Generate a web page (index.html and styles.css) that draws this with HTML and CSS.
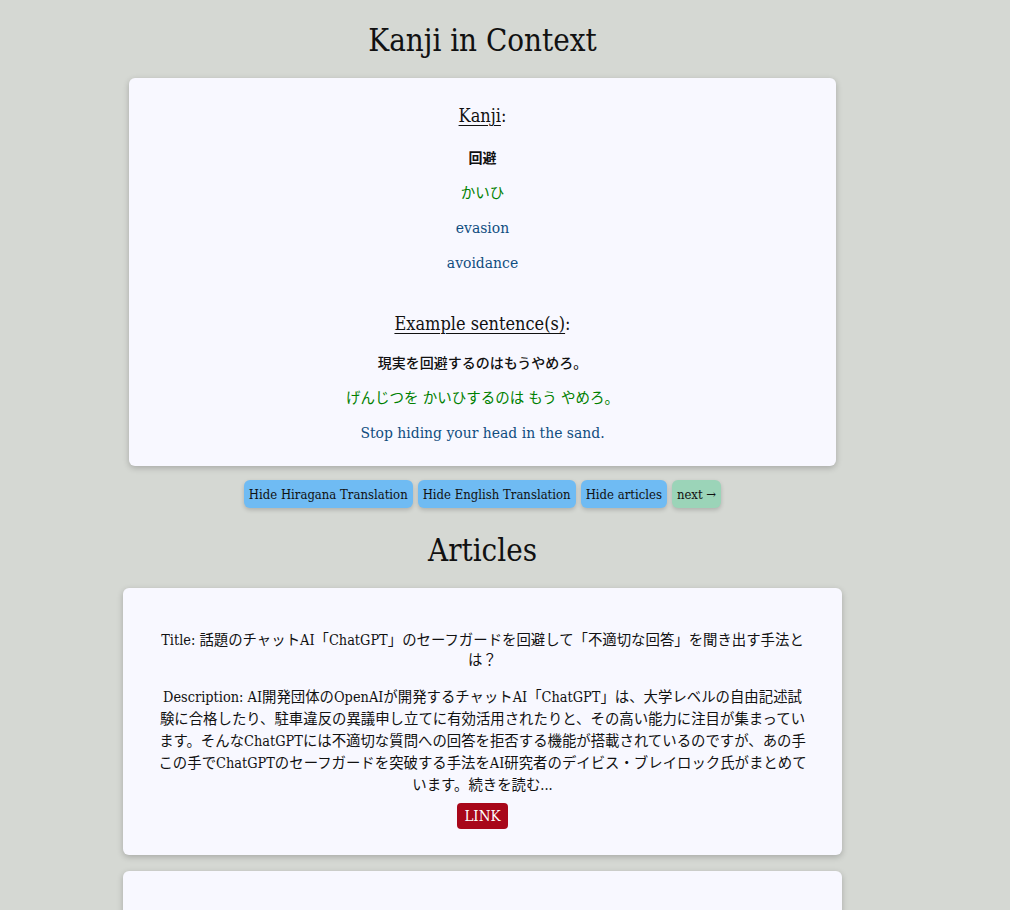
FILE: index.html
```html
<!DOCTYPE html>
<html lang="ja">
<head>
<meta charset="utf-8">
<title>Kanji in Context</title>
<link rel="stylesheet" href="styles.css">
</head>
<body>
  <main class="page">
    <h1 class="page-title">Kanji in Context</h1>

    <section class="card kanji-card">
      <h2 class="label"><u>Kanji</u>:</h2>
      <p class="line kanji">回避</p>
      <p class="line kana">かいひ</p>
      <p class="line meaning">evasion</p>
      <p class="line meaning">avoidance</p>

      <h2 class="label example-label"><u>Example sentence(s)</u>:</h2>
      <p class="line sentence">現実を回避するのはもうやめろ。</p>
      <p class="line kana">げんじつを かいひするのは もう やめろ。</p>
      <p class="line meaning">Stop hiding your head in the sand.</p>
    </section>

    <div class="controls">
      <button class="btn btn-toggle">Hide Hiragana Translation</button>
      <button class="btn btn-toggle">Hide English Translation</button>
      <button class="btn btn-toggle">Hide articles</button>
      <button class="btn btn-next">next →</button>
    </div>

    <h2 class="section-title">Articles</h2>

    <article class="card article-card">
      <p class="article-title">Title: 話題のチャットAI「ChatGPT」のセーフガードを回避して「不適切な回答」を聞き出す手法とは？</p>
      <p class="article-desc">Description: AI開発団体のOpenAIが開発するチャットAI「ChatGPT」は、大学レベルの自由記述試験に合格したり、駐車違反の異議申し立てに有効活用されたりと、その高い能力に注目が集まっています。そんなChatGPTには不適切な質問への回答を拒否する機能が搭載されているのですが、あの手この手でChatGPTのセーフガードを突破する手法をAI研究者のデイビス・ブレイロック氏がまとめています。続きを読む...</p>
      <a class="link-btn" href="#">LINK</a>
    </article>

    <article class="card article-card">
      <p class="article-title">Title: 「回避」のニュース</p>
    </article>
  </main>
</body>
</html>
```

FILE: styles.css
```css
html, body {
  margin: 0;
  padding: 0;
}

body {
  background: #d5d8d3;
  color: #111;
  font-family: "DejaVu Serif Condensed", "Liberation Serif", "Noto Sans CJK JP", serif;
  text-align: center;
}

.page {
  width: 965px;
}

.page-title {
  font-size: 31px;
  font-weight: 400;
  line-height: 40px;
  margin: 20px 0 18px;
}

.card {
  background: #f8f8ff;
  border-radius: 6px;
  box-shadow: 0 2px 6px rgba(0, 0, 0, 0.22);
  margin: 0 auto;
  box-sizing: border-box;
}

.kanji-card {
  width: 707px;
  padding: 26px 20px 23px;
}

.label {
  font-size: 18px;
  font-weight: 400;
  line-height: 24px;
  margin: 0 0 20px;
}

.example-label {
  margin-top: 39px;
  margin-bottom: 17px;
}

.label u {
  text-underline-offset: 3px;
  text-decoration-thickness: 1px;
}

.line {
  font-size: 15px;
  line-height: 20px;
  margin: 0 0 15px;
}

.line:last-child {
  margin-bottom: 0;
}

.kanji {
  font-size: 14px;
  font-weight: 600;
}

.sentence {
  font-size: 14px;
  font-weight: 500;
}

.kana {
  color: #008000;
  font-size: 14.5px;
}

.meaning {
  color: #104d80;
  font-size: 15.5px;
}

.controls {
  display: flex;
  justify-content: center;
  gap: 5px;
  margin: 14px 0 0;
}

.btn {
  font-family: inherit;
  font-size: 13px;
  color: #111;
  height: 28px;
  padding: 0 5px;
  border: none;
  border-radius: 6px;
  box-shadow: 0 2px 4px rgba(0, 0, 0, 0.18);
  cursor: pointer;
}

.btn-toggle {
  background: #6fbbf3;
}

.btn-next {
  background: #9bd4b8;
}

.section-title {
  font-size: 31px;
  font-weight: 400;
  line-height: 40px;
  margin: 22px 0 18px;
}

.article-card {
  width: 719px;
  padding: 42px 34px 26px;
  margin-bottom: 16px;
}

.article-title {
  font-size: 14.4px;
  line-height: 20px;
  margin: 0 0 16px;
}

.article-desc {
  font-size: 14.4px;
  line-height: 22px;
  margin: 0 0 7px;
}

.link-btn {
  display: inline-block;
  background: #a8071a;
  color: #fff;
  font-size: 15px;
  line-height: 26px;
  padding: 0 7px;
  border-radius: 4px;
  text-decoration: none;
}
```
